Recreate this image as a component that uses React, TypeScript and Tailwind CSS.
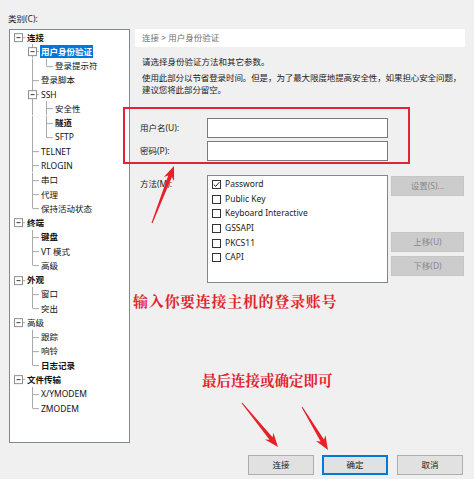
import React from "react";

type Node = { label: string; bold?: boolean; selected?: boolean; children?: Node[] };

const tree: Node[] = [
  {
    label: "连接",
    bold: true,
    children: [
      { label: "用户身份验证", bold: true, selected: true, children: [{ label: "登录提示符" }] },
      { label: "登录脚本" },
      { label: "SSH", children: [{ label: "安全性" }, { label: "隧道", bold: true }, { label: "SFTP" }] },
      { label: "TELNET" },
      { label: "RLOGIN" },
      { label: "串口" },
      { label: "代理" },
      { label: "保持活动状态" },
    ],
  },
  { label: "终端", bold: true, children: [{ label: "键盘", bold: true }, { label: "VT 模式" }, { label: "高级" }] },
  { label: "外观", bold: true, children: [{ label: "窗口" }, { label: "突出" }] },
  { label: "高级", children: [{ label: "跟踪" }, { label: "响铃" }, { label: "日志记录", bold: true }] },
  { label: "文件传输", bold: true, children: [{ label: "X/YMODEM" }, { label: "ZMODEM" }] },
];

type Row = { node: Node; depth: number; last: boolean; trail: boolean[] };

function flatten(nodes: Node[], depth = 0, trail: boolean[] = [], out: Row[] = []) {
  nodes.forEach((n, i) => {
    const last = i === nodes.length - 1;
    out.push({ node: n, depth, last, trail });
    if (n.children) flatten(n.children, depth + 1, [...trail, last], out);
  });
  return out;
}

const ROW_H = 14.28;
const LINE = "#a8a8a8";

// one 14px column of the tree guide lines
const Cell = ({ kind, box }: { kind: "none" | "line" | "tee" | "ell" | "root"; box?: boolean }) => {
  const m = ROW_H / 2;
  return (
    <svg width={14} height={ROW_H} className="shrink-0">
      {(kind === "line" || kind === "tee") && <line x1={7.5} y1={0} x2={7.5} y2={ROW_H} stroke={LINE} />}
      {kind === "ell" && <line x1={7.5} y1={0} x2={7.5} y2={m} stroke={LINE} />}
      {(kind === "tee" || kind === "ell" || kind === "root") && (
        <line x1={7.5} y1={m + 0.5} x2={14} y2={m + 0.5} stroke={LINE} />
      )}
      {box && (
        <>
          <rect x={3.5} y={m - 3.5} width={8} height={8} fill="white" stroke="#8f8f8f" />
          <line x1={5.5} y1={m + 0.5} x2={9.5} y2={m + 0.5} stroke="#3c3c3c" />
        </>
      )}
    </svg>
  );
};

function arrow(x1: number, y1: number, x2: number, y2: number) {
  const dx = x2 - x1,
    dy = y2 - y1,
    L = Math.hypot(dx, dy);
  const ux = dx / L,
    uy = dy / L,
    nx = -uy,
    ny = ux;
  const headLen = 14,
    headW = 11,
    neck = 4,
    tail = 1;
  const bx = x2 - ux * headLen,
    by = y2 - uy * headLen;
  const p = (x: number, y: number) => `${x.toFixed(1)},${y.toFixed(1)}`;
  return [
    p(x1 + (nx * tail) / 2, y1 + (ny * tail) / 2),
    p(bx + (nx * neck) / 2 + ux * 3, by + (ny * neck) / 2 + uy * 3),
    p(bx + (nx * headW) / 2, by + (ny * headW) / 2),
    p(x2, y2),
    p(bx - (nx * headW) / 2, by - (ny * headW) / 2),
    p(bx - (nx * neck) / 2 + ux * 3, by - (ny * neck) / 2 + uy * 3),
    p(x1 - (nx * tail) / 2, y1 - (ny * tail) / 2),
  ].join(" ");
}

const Check = ({ label, checked }: { label: string; checked?: boolean }) => (
  <div className="flex h-[14.7px] items-center">
    <span className="flex h-[9px] w-[9px] shrink-0 items-center justify-center border border-[#333333] bg-white">
      {checked && (
        <svg width="7" height="7" viewBox="0 0 7 7">
          <path d="M0.8 3.6 L2.7 5.4 L6.2 1.3" fill="none" stroke="#222" strokeWidth="1" />
        </svg>
      )}
    </span>
    <span className="ml-[4px]">{label}</span>
  </div>
);

const SideBtn = ({ label, className }: { label: string; className?: string }) => (
  <div
    className={
      "flex h-[20px] w-[73px] items-center justify-center border border-[#c6c6c6] bg-[#cccccc] text-[#8a8a8a] " +
      (className ?? "")
    }
  >
    {label}
  </div>
);

export default function App() {
  const rows = flatten(tree);

  return (
    <div className="relative h-[482px] w-[474px] overflow-hidden bg-[#f0f0f0] font-['Noto_Sans','Noto_Sans_CJK_SC',sans-serif] text-[8.5px] text-[#1b1b1b]">
      <div className="h-[13px] pl-[8px] pt-[12px] leading-[13px] box-content">类别(C):</div>

      <div className="mt-[4px] flex">
        {/* category tree */}
        <div className="ml-[9px] h-[414px] w-[121px] border border-[#828790] bg-white pl-[1px]">
          {rows.map((r, i) => {
            const cells = [];
            for (let k = 0; k < r.depth; k++) {
              const cont = k >= 1 && !r.trail[k];
              cells.push(<Cell key={k} kind={cont ? "line" : "none"} />);
            }
            const hasKids = !!r.node.children;
            cells.push(
              <Cell
                key="c"
                kind={r.depth === 0 ? (hasKids ? "root" : "none") : r.last ? "ell" : "tee"}
                box={hasKids}
              />
            );
            return (
              <div key={i} className="flex h-[14.28px] items-center">
                {cells}
                <span
                  className={
                    "ml-[1px] whitespace-nowrap px-[1px] leading-[13px] " +
                    (r.node.bold ? "font-bold " : "") +
                    (r.node.selected ? "bg-[#0078d7] text-white" : "text-[#111111]")
                  }
                >
                  {r.node.label}
                </span>
              </div>
            );
          })}
        </div>

        {/* settings page */}
        <div className="ml-[5px] w-[330px]">
          <div className="flex h-[18px] items-center bg-white pl-[7px] text-[#707070]">连接 &gt; 用户身份验证</div>
          <p className="mt-[9px] pl-[7px] leading-[12px]">请选择身份验证方法和其它参数。</p>
          <p className="mt-[4px] pl-[7px] leading-[11.5px] tracking-[-0.1px]">
            使用此部分以节省登录时间。但是，为了最大限度地提高安全性，如果担心安全问题，
            <br />
            建议您将此部分留空。
          </p>

          <div className="mt-[23px] flex items-center">
            <span className="w-[72px] pl-[5px]">用户名(U):</span>
            <div className="h-[20px] w-[181px] border border-[#7a7a7a] bg-white" />
          </div>
          <div className="mt-[3px] flex items-center">
            <span className="w-[72px] pl-[5px]">密码(P):</span>
            <div className="h-[20px] w-[181px] border border-[#7a7a7a] bg-white" />
          </div>

          <div className="mt-[14px] flex">
            <span className="w-[72px] pl-[5px] pt-[3px] leading-[12px]">方法(M):</span>
            <div className="h-[108px] w-[181px] border border-[#828790] bg-white pl-[4px] pt-[1px]">
              <Check label="Password" checked />
              <Check label="Public Key" />
              <Check label="Keyboard Interactive" />
              <Check label="GSSAPI" />
              <Check label="PKCS11" />
              <Check label="CAPI" />
            </div>
            <div className="ml-[3px] flex flex-col">
              <SideBtn label="设置(S)..." className="mt-[1px]" />
              <SideBtn label="上移(U)" className="mt-[36px]" />
              <SideBtn label="下移(D)" className="mt-[4px]" />
            </div>
          </div>

          <p className="-ml-[2px] mt-[8px] font-['Noto_Serif_CJK_SC','Noto_Sans_CJK_SC',serif] text-[15px] font-bold leading-[20px] tracking-[0.7px] text-[#e3222c]">
            输入你要连接主机的登录账号
          </p>
          <p className="ml-[67px] mt-[59px] font-['Noto_Serif_CJK_SC','Noto_Sans_CJK_SC',serif] text-[14.5px] font-bold leading-[20px] text-[#e3222c]">
            最后连接或确定即可
          </p>
        </div>
      </div>

      <div className="mt-[12px] flex justify-end pr-[11px]">
        <div className="flex h-[20px] w-[66px] items-center justify-center border border-[#adadad] bg-[#e1e1e1]">连接</div>
        <div className="ml-[8px] flex h-[20px] w-[66px] items-center justify-center border-2 border-[#0078d7] bg-[#e1e1e1]">
          确定
        </div>
        <div className="ml-[9px] flex h-[20px] w-[66px] items-center justify-center border border-[#adadad] bg-[#e1e1e1]">取消</div>
      </div>
      <div className="absolute bottom-0 left-0 h-[3px] w-full bg-white" />

      {/* annotations */}
      <div className="pointer-events-none absolute left-[123px] top-[107px] h-[57px] w-[287px] border-2 border-[#e3223a]" />
      <svg className="pointer-events-none absolute left-0 top-0" width={474} height={482}>
        <polygon points={arrow(152, 223, 174, 166)} fill="#e8202a" />
        <polygon points={arrow(242, 403, 278, 447)} fill="#e8202a" />
        <polygon points={arrow(302, 407, 328, 450)} fill="#e8202a" />
      </svg>
    </div>
  );
}
